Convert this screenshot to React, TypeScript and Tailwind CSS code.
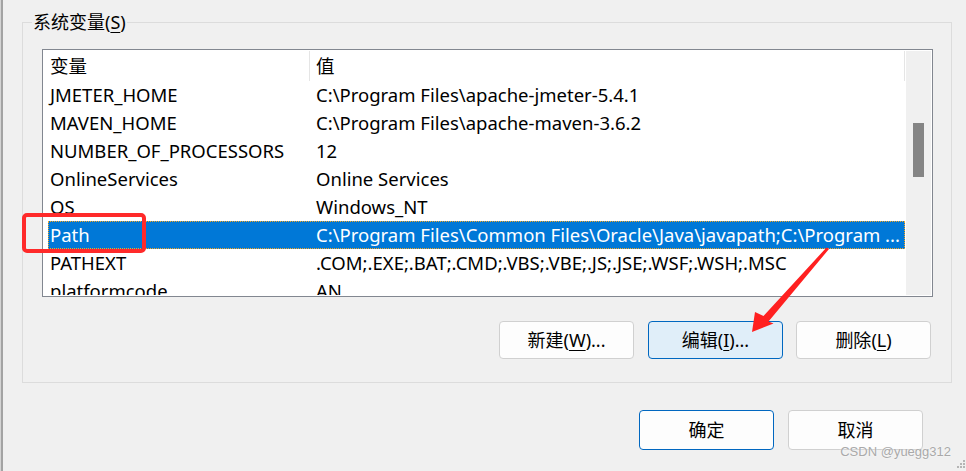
const ROWS = [
  ["JMETER_HOME", "C:\\Program Files\\apache-jmeter-5.4.1"],
  ["MAVEN_HOME", "C:\\Program Files\\apache-maven-3.6.2"],
  ["NUMBER_OF_PROCESSORS", "12"],
  ["OnlineServices", "Online Services"],
  ["OS", "Windows_NT"],
  ["Path", "C:\\Program Files\\Common Files\\Oracle\\Java\\javapath;C:\\Program ..."],
  ["PATHEXT", ".COM;.EXE;.BAT;.CMD;.VBS;.VBE;.JS;.JSE;.WSF;.WSH;.MSC"],
  ["platformcode", "AN"],
];

const SELECTED = "Path";

function Btn({
  label,
  mnemonic,
  tail = "",
  tone = "plain",
  tall = false,
}: {
  label: string;
  mnemonic?: string;
  tail?: string;
  tone?: "plain" | "focus" | "default";
  tall?: boolean;
}) {
  const tones = {
    plain: "border-[#d0d0d0] bg-[#fdfdfd]",
    focus: "border-[#0067c0] bg-[#e0eef9]",
    default: "border-[#0067c0] bg-[#fdfdfd]",
  };
  return (
    <button
      className={`flex w-[135px] items-center justify-center rounded-[4px] border text-[18px] text-black ${
        tall ? "h-[40px]" : "h-[38px]"
      } ${tones[tone]}`}
    >
      {label}
      {mnemonic && (
        <>
          (<span className="underline underline-offset-[3px]">{mnemonic}</span>)
        </>
      )}
      {tail}
    </button>
  );
}

export default function App() {
  return (
    <div className="relative flex h-[471px] w-[966px] overflow-hidden bg-[#f0f0f0] font-['Noto_Sans','Noto_Sans_CJK_SC',sans-serif] text-black">
      {/* edge of the window behind */}
      <div className="h-full w-[3px] shrink-0 border-r-2 border-[#a3a3a3] bg-[#d4d4d4]" />

      <div className="flex flex-1 flex-col pl-[19px] pt-[22px]">
        {/* group box */}
        <div className="relative h-[361px] w-[930px] border border-[#dcdcdc] pl-[19px] pt-[26px]">
          <div className="absolute left-[9px] top-[-13px] bg-[#f0f0f0] px-px text-[18px] leading-[24px]">
            系统变量(<span className="underline underline-offset-[3px]">S</span>)
          </div>

          <div className="flex h-[248px] w-[891px] border border-[#828790] bg-white p-px">
            <div className="flex w-[862px] flex-col overflow-hidden text-[18.5px]">
              <div className="flex h-[30px] shrink-0 items-center">
                <div className="flex h-full w-[266px] items-center border-r border-[#e5e5e5] pl-[6px]">变量</div>
                <div className="flex h-full flex-1 items-center border-r border-[#e5e5e5] pl-[6px]">值</div>
                <div className="w-px" />
              </div>
              {ROWS.map(([name, value]) => {
                const sel = name === SELECTED;
                return (
                  <div
                    key={name}
                    className={`ml-[4px] mr-px flex h-[28px] shrink-0 items-center whitespace-nowrap leading-[28px] ${
                      sel ? "bg-[#0078d7] text-white outline-1 -outline-offset-1 outline-dotted outline-[#f5a623]" : ""
                    }`}
                  >
                    <div className="w-[262px] pl-[2px]">{name}</div>
                    <div className="flex-1 pl-[6px]">{value}</div>
                  </div>
                );
              })}
            </div>

            {/* vertical scrollbar */}
            <div className="flex w-[25px] justify-center bg-[#f0f0f0]">
              <div className="mt-[72px] h-[54px] w-[11px] bg-[#858585]" />
            </div>
          </div>

          <div className="mt-[24px] flex w-[889px] justify-end gap-[13px]">
            <div className="mr-px">
              <Btn label="新建" mnemonic="W" tail="..." />
            </div>
            <Btn label="编辑" mnemonic="I" tail="..." tone="focus" />
            <Btn label="删除" mnemonic="L" />
          </div>
        </div>

        <div className="mt-[27px] flex justify-end gap-[14px] pr-[43px]">
          <Btn label="确定" tone="default" tall />
          <Btn label="取消" tall />
        </div>
      </div>

      {/* annotation: red box round the Path row */}
      <div className="pointer-events-none absolute left-[22px] top-[213px] h-[40px] w-[124px] rounded-[5px] border-4 border-[#ff2a2a]" />

      {/* annotation: red arrow to the edit button */}
      <svg className="pointer-events-none absolute inset-0" width="966" height="471" viewBox="0 0 966 471">
        <polygon
          points="752,332 755,312 763.5,316 826.5,247.5 829,249 768.5,321.5 773.5,323.5"
          fill="#ff2020"
        />
      </svg>

      {/* watermark */}
      <div className="absolute right-[15px] top-[444px] font-['Liberation_Sans',sans-serif] text-[13px] leading-[16px] text-[#a9a9a9] [text-shadow:0_0_2px_#ffffff]">
        CSDN @yuegg312
      </div>

      {/* size grip */}
      <svg className="absolute bottom-0 right-0" width="10" height="14" viewBox="0 0 10 14">
        <g fill="#b5b5b5">
          <rect x="7" y="3" width="2" height="2" />
          <rect x="4" y="6" width="2" height="2" />
          <rect x="7" y="6" width="2" height="2" />
          <rect x="1" y="9" width="2" height="2" />
          <rect x="4" y="9" width="2" height="2" />
          <rect x="7" y="9" width="2" height="2" />
        </g>
      </svg>
    </div>
  );
}
